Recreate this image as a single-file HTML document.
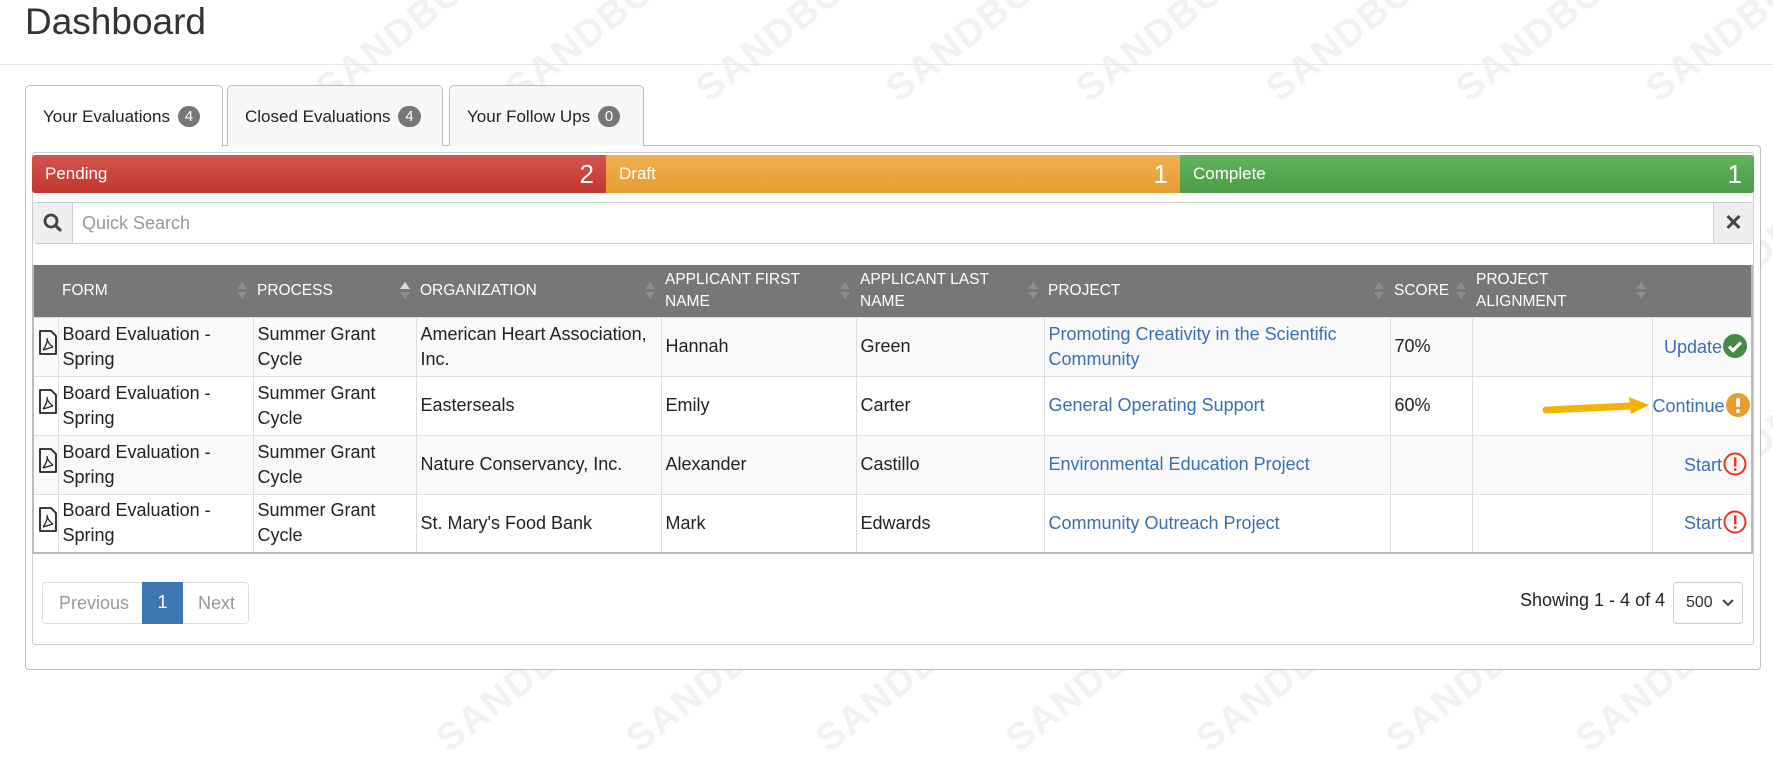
<!DOCTYPE html>
<html><head><meta charset="utf-8">
<style>
*{box-sizing:border-box}
body{margin:0;width:1773px;height:705px;background:#fff;font-family:"Liberation Sans",Arial,sans-serif;color:#222;position:relative;overflow:hidden}
.wm{position:absolute;font-size:38px;font-weight:bold;color:#f1f1f1;transform:rotate(-38deg);letter-spacing:2px;white-space:nowrap;z-index:0}
.abs{position:absolute}
h1{position:absolute;left:25px;top:0;margin:0;font-size:37px;font-weight:normal;color:#333;line-height:44px}
.hr{position:absolute;left:0;top:64px;width:1773px;height:1px;background:#e6e6e6}
.tab{position:absolute;top:85px;height:61px;border:1px solid #bbb;border-bottom:none;border-radius:5px 5px 0 0;background:#f7f7f7;font-size:17px;padding-top:20px;padding-left:17px;color:#222;z-index:2}
.tab.act{background:#fff;height:62px}
.badge{display:inline-block;background:#777;color:#fff;border-radius:12px;font-size:15px;padding:2px 7px;margin-left:3px;vertical-align:1px}
.panel{position:absolute;left:25px;top:145px;width:1736px;height:525px;border:1px solid #bbb;border-radius:0 4px 4px 4px;background:#fff;z-index:1}
.inner{position:absolute;left:32px;top:152px;width:1722px;height:493px;border:1px solid #ccc;border-radius:3px;z-index:2}
.bar{position:absolute;top:155px;height:38px;color:#fff;font-size:17px;line-height:38px;padding-left:13px;z-index:3}
.bar b{position:absolute;right:12px;top:0;font-weight:normal;font-size:26px}
.search{position:absolute;left:32px;top:202px;width:1722px;height:42px;border:1px solid #ccc;border-radius:4px;background:#fff;z-index:3}
table{position:absolute;left:32px;top:265px;width:1721px;border-collapse:collapse;z-index:3;font-size:18px;border:2px solid #bbb;border-top:none;table-layout:fixed}
th{background:#777;color:#fff;font-weight:normal;font-size:15.5px;text-align:left;height:52px;padding:0 4px;line-height:22px;position:relative}
td{height:59px;border:1px solid #ddd;padding:0 4px;line-height:25px;vertical-align:middle}
tr.o td{background:#f9f9f9}
a{color:#3a6fb0;text-decoration:none}
.s{position:absolute;right:8px;top:17px;width:8px;height:18px}
.s:before,.s:after{content:"";position:absolute;left:0;border-left:5px solid transparent;border-right:5px solid transparent}
.s:before{top:0;border-bottom:7px solid #8e8e8e}
.s:after{top:10px;border-top:7px solid #8e8e8e}
.s.up:before{border-bottom-color:#ddd}
.act-cell{text-align:right;padding-right:4px;white-space:nowrap;padding-left:0}
.ic{display:inline-block;width:24px;height:24px;vertical-align:-5px;margin-left:1px}
</style></head><body>

<div class="wm" style="left:300px;top:10px">SANDBOX</div>
<div class="wm" style="left:490px;top:10px">SANDBOX</div>
<div class="wm" style="left:680px;top:10px">SANDBOX</div>
<div class="wm" style="left:870px;top:10px">SANDBOX</div>
<div class="wm" style="left:1060px;top:10px">SANDBOX</div>
<div class="wm" style="left:1250px;top:10px">SANDBOX</div>
<div class="wm" style="left:1440px;top:10px">SANDBOX</div>
<div class="wm" style="left:1630px;top:10px">SANDBOX</div>
<div class="wm" style="left:1660px;top:230px">SANDBOX</div>
<div class="wm" style="left:1660px;top:420px">SANDBOX</div>
<div class="wm" style="left:420px;top:660px">SANDBOX</div>
<div class="wm" style="left:610px;top:660px">SANDBOX</div>
<div class="wm" style="left:800px;top:660px">SANDBOX</div>
<div class="wm" style="left:990px;top:660px">SANDBOX</div>
<div class="wm" style="left:1180px;top:660px">SANDBOX</div>
<div class="wm" style="left:1370px;top:660px">SANDBOX</div>
<div class="wm" style="left:1560px;top:660px">SANDBOX</div>

<h1>Dashboard</h1>
<div class="hr"></div>

<div class="tab act" style="left:25px;width:198px">Your Evaluations <span class="badge">4</span></div>
<div class="tab" style="left:227px;width:216px">Closed Evaluations <span class="badge">4</span></div>
<div class="tab" style="left:449px;width:195px">Your Follow Ups <span class="badge">0</span></div>

<div class="panel"></div>
<div class="inner"></div>

<div class="bar" style="left:32px;width:574px;background:linear-gradient(#d3554f,#c2352f);border-radius:3px 0 0 3px">Pending<b>2</b></div>
<div class="bar" style="left:606px;width:574px;background:linear-gradient(#eeb055,#e79c2f)">Draft<b>1</b></div>
<div class="bar" style="left:1180px;width:574px;background:linear-gradient(#62b35d,#4c9c47);border-radius:0 3px 3px 0">Complete<b>1</b></div>

<div class="search">
  <div class="abs" style="left:0;top:0;width:40px;height:40px;background:#eee;border-right:1px solid #ccc">
    <svg width="40" height="40"><circle cx="18" cy="18" r="6" fill="none" stroke="#444" stroke-width="2.8"/><line x1="22.5" y1="22.5" x2="27" y2="27" stroke="#444" stroke-width="3.2" stroke-linecap="round"/></svg>
  </div>
  <div class="abs" style="left:49px;top:10px;font-size:18px;color:#999">Quick Search</div>
  <div class="abs" style="right:0;top:0;width:40px;height:40px;background:#eee;border-left:1px solid #ccc;font-size:22px;font-weight:bold;color:#444;text-align:center;line-height:40px">✕</div>
</div>

<table>
<colgroup><col style="width:25px"><col style="width:195px"><col style="width:163px"><col style="width:245px"><col style="width:195px"><col style="width:188px"><col style="width:346px"><col style="width:82px"><col style="width:180px"><col></colgroup>
<tr>
<th></th>
<th>FORM<span class="s"></span></th>
<th>PROCESS<span class="s up"></span></th>
<th>ORGANIZATION<span class="s"></span></th>
<th>APPLICANT FIRST<br>NAME<span class="s"></span></th>
<th>APPLICANT LAST<br>NAME<span class="s"></span></th>
<th>PROJECT<span class="s"></span></th>
<th>SCORE<span class="s"></span></th>
<th>PROJECT<br>ALIGNMENT<span class="s"></span></th>
<th></th>
</tr>
<tr class="o">
<td><svg width="20" height="26" viewBox="0 0 20 26"><path d="M2 1h11l5 5v18H2z" fill="none" stroke="#222" stroke-width="1.8" stroke-linejoin="round"/><path d="M5 20c3-4 5-9 4-12M5 20l10-3M9 9c1 4 3 6 6 8" fill="none" stroke="#222" stroke-width="1.3"/></svg></td>
<td>Board Evaluation -<br>Spring</td><td>Summer Grant<br>Cycle</td><td>American Heart Association,<br>Inc.</td><td>Hannah</td><td>Green</td>
<td><a>Promoting Creativity in the Scientific<br>Community</a></td><td>70%</td><td></td>
<td class="act-cell"><a>Update</a><svg class="ic" viewBox="0 0 24 24"><circle cx="12" cy="12" r="12" fill="#468847"/><path d="M6 12.5l4 4 8-8" fill="none" stroke="#fff" stroke-width="3.2"/></svg></td>
</tr>
<tr>
<td><svg width="20" height="26" viewBox="0 0 20 26"><path d="M2 1h11l5 5v18H2z" fill="none" stroke="#222" stroke-width="1.8" stroke-linejoin="round"/><path d="M5 20c3-4 5-9 4-12M5 20l10-3M9 9c1 4 3 6 6 8" fill="none" stroke="#222" stroke-width="1.3"/></svg></td>
<td>Board Evaluation -<br>Spring</td><td>Summer Grant<br>Cycle</td><td>Easterseals</td><td>Emily</td><td>Carter</td>
<td><a>General Operating Support</a></td><td>60%</td><td></td>
<td class="act-cell" style="position:relative"><svg class="abs" style="left:-110px;top:16px" width="110" height="24" viewBox="0 0 110 24"><path d="M3 17L88 13" stroke="#f2b400" stroke-width="7" stroke-linecap="round"/><path d="M86 4L106 12L88 21z" fill="#f2b400"/></svg><a>Continue</a><svg class="ic" viewBox="0 0 24 24"><circle cx="12" cy="12" r="12" fill="#e99b2d"/><rect x="10" y="5" width="4" height="9" rx="1.5" fill="#fff"/><circle cx="12" cy="18" r="2" fill="#fff"/></svg></td>
</tr>
<tr class="o">
<td><svg width="20" height="26" viewBox="0 0 20 26"><path d="M2 1h11l5 5v18H2z" fill="none" stroke="#222" stroke-width="1.8" stroke-linejoin="round"/><path d="M5 20c3-4 5-9 4-12M5 20l10-3M9 9c1 4 3 6 6 8" fill="none" stroke="#222" stroke-width="1.3"/></svg></td>
<td>Board Evaluation -<br>Spring</td><td>Summer Grant<br>Cycle</td><td>Nature Conservancy, Inc.</td><td>Alexander</td><td>Castillo</td>
<td><a>Environmental Education Project</a></td><td></td><td></td>
<td class="act-cell"><a>Start</a><svg class="ic" viewBox="0 0 24 24"><circle cx="12" cy="12" r="10.5" fill="none" stroke="#e32" stroke-width="2"/><rect x="11" y="5.5" width="2.4" height="9" fill="#e32"/><circle cx="12.2" cy="17.5" r="1.4" fill="#e32"/></svg></td>
</tr>
<tr>
<td><svg width="20" height="26" viewBox="0 0 20 26"><path d="M2 1h11l5 5v18H2z" fill="none" stroke="#222" stroke-width="1.8" stroke-linejoin="round"/><path d="M5 20c3-4 5-9 4-12M5 20l10-3M9 9c1 4 3 6 6 8" fill="none" stroke="#222" stroke-width="1.3"/></svg></td>
<td>Board Evaluation -<br>Spring</td><td>Summer Grant<br>Cycle</td><td>St. Mary's Food Bank</td><td>Mark</td><td>Edwards</td>
<td><a>Community Outreach Project</a></td><td></td><td></td>
<td class="act-cell"><a>Start</a><svg class="ic" viewBox="0 0 24 24"><circle cx="12" cy="12" r="10.5" fill="none" stroke="#e32" stroke-width="2"/><rect x="11" y="5.5" width="2.4" height="9" fill="#e32"/><circle cx="12.2" cy="17.5" r="1.4" fill="#e32"/></svg></td>
</tr>
</table>

<div class="abs" style="left:42px;top:582px;height:42px;width:207px;border:1px solid #ddd;border-radius:4px;z-index:3;font-size:18px;color:#999;line-height:40px">
  <span class="abs" style="left:16px">Previous</span>
  <span class="abs" style="left:99px;top:-1px;width:41px;height:42px;background:#3e78b4;color:#fff;text-align:center">1</span>
  <span class="abs" style="left:155px">Next</span>
</div>
<div class="abs" style="left:1520px;top:590px;font-size:18px;color:#222;z-index:3">Showing 1 - 4 of 4</div>
<div class="abs" style="left:1673px;top:582px;width:70px;height:42px;border:1px solid #ccc;border-radius:4px;z-index:3;font-size:16px;line-height:40px;padding-left:12px;color:#333">500<svg class="abs" style="right:8px;top:16px" width="12" height="8"><path d="M1 1l5 5 5-5" fill="none" stroke="#444" stroke-width="2"/></svg></div>

</body></html>
